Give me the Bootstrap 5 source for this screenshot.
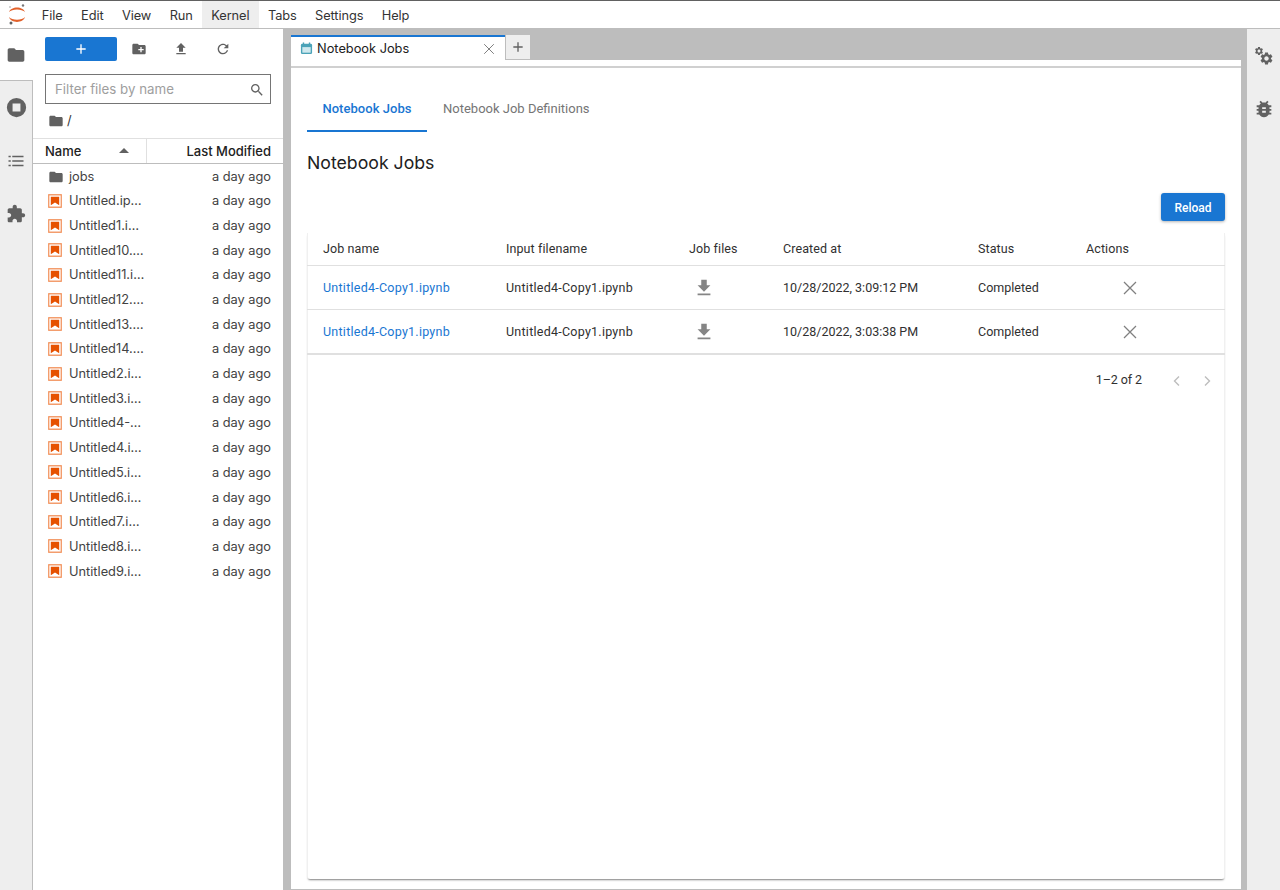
<!DOCTYPE html>
<html lang="en">
<head>
<meta charset="utf-8">
<title>Notebook Jobs</title>
<link href="https://cdn.jsdelivr.net/npm/bootstrap@5.3.0/dist/css/bootstrap.min.css" rel="stylesheet">
<style>
html,body{height:890px;overflow:hidden;margin:0}
body{font-family:Inter,"Liberation Sans",sans-serif;font-size:12.8px;color:#333;background:#bdbdbd}
svg{display:block;fill:#616161}
.jl-top{height:29px;background:#fff;border-top:1px solid #616161;border-bottom:1px solid #bdbdbd;padding-left:32.5px}
.jl-logo{width:32px;margin-left:-32px;padding-left:7px;padding-top:3px}
.jl-menu{padding:0 9.25px;line-height:29px;color:#333;letter-spacing:-.1px}
.jl-menu.on{background:#eee}
.jl-body{height:861px}
.jl-side{width:33px;background:#eee;flex:none}
.jl-side-l{border-right:1px solid #bdbdbd}
.jl-side-btn{height:53px}
.jl-side-btn.on{background:#fff;margin-right:-1px;padding-right:1px;border-bottom:1px solid #bdbdbd;height:52px;position:relative;z-index:1}
.jl-files{width:250px;flex:none;background:#fff}
.jl-tools{padding:8px 0 0 12px;height:43px}
.jl-new{width:72px;height:24px;background:#1976d2;border-radius:2px;border:0;padding:0}
.jl-new svg{fill:#fff}
.jl-tool{width:42px}
.jl-tool1{margin-left:1px}
.jl-filter{margin:2px 12px 0;height:30px;border:1px solid #757575;padding:1px 5px 0 9px;color:#9e9e9e;font-size:13.3px}
.jl-crumb{height:34px;padding-left:15px}
.jl-crumb svg{margin-right:3px}
.jl-head{height:26px;border-top:1px solid #e0e0e0;border-bottom:1px solid #bdbdbd;font-weight:500;font-size:13px;color:#212121}
.jl-hname{width:114px;padding-left:12px;border-right:1px solid #e0e0e0;position:relative}
.jl-hdate{flex:1;text-align:right;padding-right:12px}
.jl-hname,.jl-hdate{line-height:24px}
.jl-caret{position:absolute;left:86px;top:9px;width:0;height:0;border:5px solid transparent;border-top:0;border-bottom:5px solid #616161}
.jl-list{padding-top:.5px}
.jl-row{height:24.7px;padding:0 12px 0 15px}
.jl-row:first-child{height:24px}
.jl-fname{width:21px;flex:none}
.jl-ftext{flex:1;color:#424242}
.jl-fdate{color:#424242}
.jl-split{width:8px;flex:none}
.jl-main{width:950px;flex:none}
.jl-tabbar{height:31px;padding-top:6px}
.jl-tab{width:214px;height:25px;background:#fff;border-top:2px solid #1976d2;padding:0 8px 0 9px;color:#212121}
.jl-tabadd{width:24px;height:24px;margin-left:1px;background:#eee}
.jl-strip{height:8px;background:#fff;border-bottom:2px solid #d0d0d0}
.jl-page{height:821px;background:#fff;padding:0 16px;font-family:Roboto,"Liberation Sans",sans-serif}
.jl-tabs{height:63px;padding-top:21px;font-size:13px;font-weight:500}
.jl-t1{width:120px;text-align:center;color:#1976d2;border-bottom:2px solid #1976d2;height:43px;line-height:40px;letter-spacing:.05px}
.jl-t2{padding-left:16px;color:#757575;line-height:40px;font-weight:400}
.jl-title{font-size:17.7px;font-weight:400;color:#212121;margin:0;height:42px;padding-top:20px;line-height:24px;font-family:Inter,"Liberation Sans",sans-serif;box-sizing:content-box}
.jl-reload-wrap{height:40px}
.jl-reload{width:64px;height:28px;background:#1976d2;color:#fff;border:0;border-radius:3px;padding:1px 0 0;font-size:12px;font-weight:500;box-shadow:0 1px 3px rgba(0,0,0,.3)}
.jl-card{height:646px;box-shadow:0 2px 2px -1px rgba(0,0,0,.5);border-radius:0 0 3px 3px;background:#fff;border-right:1px solid #f0f0f0;border-left:1px solid #f0f0f0}
.jl-table{table-layout:fixed;width:918px;margin:0 0 0 -1px;font-size:12.5px}
.jl-table th,.jl-table td{padding:2px 16px 0;height:44px;vertical-align:middle;border-bottom:1px solid #e0e0e0;font-weight:400;color:#303030}
.jl-table th{height:32px;letter-spacing:.1px}
.jl-table tr:last-child td{height:45px;border-bottom:2px solid #e0e0e0}
.jl-table a{color:#1976d2;text-decoration:none}
.jl-table .jl-fn{letter-spacing:.25px}
.jl-c1,.jl-c2{width:183px}.jl-c3{width:94px}.jl-c4{width:195px}.jl-c5{width:108px}.jl-c6{width:155px}
.jl-ic{margin-left:4px}
.jl-ix{margin-left:34px}
.jl-ic svg{fill:#858585}
.jl-xs{fill:none;stroke:#808080;stroke-width:1.5}
.jl-pager{height:51px;padding-right:9px;color:#303030;font-size:12.5px;margin-left:-1px}
.jl-ptext{margin-right:27px;letter-spacing:-.1px}
.jl-pchev{fill:none;stroke:#bdbdbd;stroke-width:1.4}
.jl-pprev{margin-right:14px}
.jl-gap{width:6px;flex:none}
</style>
</head>
<body>
<svg width="0" height="0" class="position-absolute">
<defs>
<symbol id="i-folder" viewBox="0 0 24 24"><path d="M10 4H4c-1.100 0-1.990.9-1.990 2L2 18c0 1.100.9 2 2 2h16c1.100 0 2-.9 2-2V8c0-1.100-.9-2-2-2h-8l-2-2z"/></symbol>
<symbol id="i-nb" viewBox="1 1 20 20"><path fill="#ef7c3c" opacity=".75" fill-rule="evenodd" d="M2 1h18a1 1 0 0 1 1 1v18a1 1 0 0 1-1 1H2a1 1 0 0 1-1-1V2a1 1 0 0 1 1-1zm1 2v16h16V3z"/><path fill="#e65100" d="M5 5h12v12l-6-4-6 4z"/></symbol>
<symbol id="i-down" viewBox="0 0 24 24"><path d="M19 9h-4V3H9v6H5l7 7 7-7zM5 18v2h14v-2H5z"/></symbol>
<symbol id="i-x" viewBox="0 0 24 24"><path class="jl-xs" d="M4.800 4.800 19.200 19.200M19.200 4.800 4.800 19.200"/></symbol>
<symbol id="i-gear" viewBox="0 0 24 24"><path d="M19.140 12.940c.04-.3.06-.61.06-.94 0-.32-.02-.64-.07-.94l2.030-1.580c.18-.14.23-.41.12-.61l-1.920-3.320c-.12-.22-.37-.29-.59-.22l-2.390.96c-.5-.38-1.030-.7-1.620-.94l-.36-2.540c-.04-.24-.24-.41-.48-.41h-3.840c-.24 0-.43.17-.47.41l-.36 2.540c-.59.24-1.130.57-1.620.94l-2.390-.96c-.22-.08-.47 0-.59.22L2.740 8.870c-.12.21-.08.47.12.61l2.030 1.580c-.05.3-.09.63-.09.94s.02.64.07.94l-2.030 1.580c-.18.14-.23.41-.12.61l1.920 3.320c.12.22.37.29.59.22l2.390-.96c.5.38 1.030.7 1.620.94l.36 2.540c.05.24.24.41.48.41h3.840c.24 0 .44-.17.47-.41l.36-2.540c.59-.24 1.130-.56 1.620-.94l2.390.96c.22.08.47 0 .59-.22l1.920-3.320c.12-.22.07-.47-.12-.61l-2.010-1.580zM12 15.600c-1.980 0-3.600-1.620-3.600-3.600s1.620-3.600 3.600-3.600 3.600 1.620 3.600 3.600-1.620 3.600-3.600 3.600z"/></symbol>
</defs>
</svg>

<header class="jl-top d-flex align-items-stretch">
  <div class="jl-logo">
    <svg width="20" height="22" viewBox="0 0 20 22"><path fill="#e2612a" d="M1 8C3 2 15 2 17 8 14 4.500 4 4.500 1 8z"/><path fill="#e2612a" d="M1 13C3 19.500 15 19.500 17 13 14 16.500 4 16.500 1 13z"/><circle cx="15" cy="1.500" r="1.200" fill="#767677"/><circle cx="3" cy="19" r="1.500" fill="#616262"/><circle cx="2" cy="3" r=".8" fill="#9e9e9e"/></svg>
  </div>
  <div class="jl-menu">File</div><div class="jl-menu">Edit</div><div class="jl-menu">View</div><div class="jl-menu">Run</div><div class="jl-menu on">Kernel</div><div class="jl-menu">Tabs</div><div class="jl-menu">Settings</div><div class="jl-menu">Help</div>
</header>

<div class="jl-body d-flex">
  <aside class="jl-side jl-side-l">
    <div class="jl-side-btn on d-flex align-items-center justify-content-center"><svg width="20" height="20"><use href="#i-folder"/></svg></div>
    <div class="jl-side-btn d-flex align-items-center justify-content-center"><svg width="21" height="21" viewBox="0 0 24 24"><path fill-rule="evenodd" d="M12 1a11 11 0 1 0 0 22 11 11 0 0 0 0-22zM7.500 7.500h9v9h-9z"/></svg></div>
    <div class="jl-side-btn d-flex align-items-center justify-content-center"><svg width="18" height="18" viewBox="0 0 24 24"><path d="M2 5h3v2H2zM7 5h15v2H7zM2 11h3v2H2zM7 11h15v2H7zM2 17h3v2H2zM7 17h15v2H7z"/></svg></div>
    <div class="jl-side-btn d-flex align-items-center justify-content-center"><svg width="20" height="20" viewBox="0 0 24 24"><path d="M20.500 11H19V7c0-1.100-.9-2-2-2h-4V3.500C13 2.120 11.880 1 10.500 1S8 2.120 8 3.500V5H4c-1.100 0-1.990.9-1.990 2v3.800H3.500c1.490 0 2.700 1.210 2.700 2.700s-1.210 2.700-2.700 2.700H2V20c0 1.100.9 2 2 2h3.800v-1.500c0-1.490 1.210-2.700 2.700-2.700 1.490 0 2.700 1.210 2.700 2.700V22H17c1.100 0 2-.9 2-2v-4h1.500c1.380 0 2.500-1.120 2.500-2.500S21.880 11 20.500 11z"/></svg></div>
  </aside>

  <section class="jl-files d-flex flex-column">
    <div class="jl-tools d-flex align-items-start">
      <button class="jl-new d-flex align-items-center justify-content-center" type="button"><svg width="16" height="16" viewBox="0 0 24 24"><path d="M19 13h-6v6h-2v-6H5v-2h6V5h2v6h6z"/></svg></button>
      <div class="jl-tool jl-tool1 d-flex justify-content-center pt-1"><svg width="16" height="16" viewBox="0 0 24 24"><path fill-rule="evenodd" d="M20 6h-8l-2-2H4c-1.110 0-1.990.89-1.990 2L2 18c0 1.110.89 2 2 2h16c1.110 0 2-.89 2-2V8c0-1.110-.89-2-2-2zm-1 8h-3v3h-2v-3h-3v-2h3V9h2v3h3v2z"/></svg></div>
      <div class="jl-tool d-flex justify-content-center pt-1"><svg width="16" height="16" viewBox="0 0 24 24"><path d="M5 20h14v-2H5v2zm0-10h4v6h6v-6h4l-7-7-7 7z"/></svg></div>
      <div class="jl-tool d-flex justify-content-center pt-1"><svg width="16" height="16" viewBox="0 0 24 24"><path d="M17.650 6.350C16.200 4.900 14.210 4 12 4c-4.420 0-7.990 3.580-7.990 8s3.570 8 7.990 8c3.730 0 6.840-2.550 7.730-6h-2.080c-.82 2.330-3.040 4-5.650 4-3.310 0-6-2.690-6-6s2.690-6 6-6c1.660 0 3.140.69 4.220 1.780L13 11h7V4l-2.350 2.350z"/></svg></div>
    </div>
    <div class="jl-filter d-flex align-items-center justify-content-between"><span>Filter files by name</span><svg width="16" height="16" viewBox="0 0 24 24"><path d="M15.500 14h-.79l-.28-.27C15.410 12.590 16 11.110 16 9.500 16 5.910 13.090 3 9.500 3S3 5.910 3 9.500 5.910 16 9.500 16c1.610 0 3.090-.59 4.230-1.570l.27.28v.79l5 4.990L20.490 19l-4.990-5zm-6 0C7.010 14 5 11.990 5 9.500S7.010 5 9.500 5 14 7.010 14 9.500 11.990 14 9.500 14z"/></svg></div>
    <div class="jl-crumb d-flex align-items-center"><svg width="16" height="16"><use href="#i-folder"/></svg><span>/</span></div>
    <div class="jl-head d-flex"><div class="jl-hname">Name<span class="jl-caret"></span></div><div class="jl-hdate">Last Modified</div></div>
    <div class="jl-list">
      <div class="jl-row d-flex align-items-center"><span class="jl-fname"><svg width="16" height="16"><use href="#i-folder"/></svg></span><span class="jl-ftext">jobs</span><span class="jl-fdate">a day ago</span></div>
      <div class="jl-row d-flex align-items-center"><span class="jl-fname"><svg width="14" height="14"><use href="#i-nb"/></svg></span><span class="jl-ftext">Untitled.ip…</span><span class="jl-fdate">a day ago</span></div>
      <div class="jl-row d-flex align-items-center"><span class="jl-fname"><svg width="14" height="14"><use href="#i-nb"/></svg></span><span class="jl-ftext">Untitled1.i…</span><span class="jl-fdate">a day ago</span></div>
      <div class="jl-row d-flex align-items-center"><span class="jl-fname"><svg width="14" height="14"><use href="#i-nb"/></svg></span><span class="jl-ftext">Untitled10.…</span><span class="jl-fdate">a day ago</span></div>
      <div class="jl-row d-flex align-items-center"><span class="jl-fname"><svg width="14" height="14"><use href="#i-nb"/></svg></span><span class="jl-ftext">Untitled11.i…</span><span class="jl-fdate">a day ago</span></div>
      <div class="jl-row d-flex align-items-center"><span class="jl-fname"><svg width="14" height="14"><use href="#i-nb"/></svg></span><span class="jl-ftext">Untitled12.…</span><span class="jl-fdate">a day ago</span></div>
      <div class="jl-row d-flex align-items-center"><span class="jl-fname"><svg width="14" height="14"><use href="#i-nb"/></svg></span><span class="jl-ftext">Untitled13.…</span><span class="jl-fdate">a day ago</span></div>
      <div class="jl-row d-flex align-items-center"><span class="jl-fname"><svg width="14" height="14"><use href="#i-nb"/></svg></span><span class="jl-ftext">Untitled14.…</span><span class="jl-fdate">a day ago</span></div>
      <div class="jl-row d-flex align-items-center"><span class="jl-fname"><svg width="14" height="14"><use href="#i-nb"/></svg></span><span class="jl-ftext">Untitled2.i…</span><span class="jl-fdate">a day ago</span></div>
      <div class="jl-row d-flex align-items-center"><span class="jl-fname"><svg width="14" height="14"><use href="#i-nb"/></svg></span><span class="jl-ftext">Untitled3.i…</span><span class="jl-fdate">a day ago</span></div>
      <div class="jl-row d-flex align-items-center"><span class="jl-fname"><svg width="14" height="14"><use href="#i-nb"/></svg></span><span class="jl-ftext">Untitled4-…</span><span class="jl-fdate">a day ago</span></div>
      <div class="jl-row d-flex align-items-center"><span class="jl-fname"><svg width="14" height="14"><use href="#i-nb"/></svg></span><span class="jl-ftext">Untitled4.i…</span><span class="jl-fdate">a day ago</span></div>
      <div class="jl-row d-flex align-items-center"><span class="jl-fname"><svg width="14" height="14"><use href="#i-nb"/></svg></span><span class="jl-ftext">Untitled5.i…</span><span class="jl-fdate">a day ago</span></div>
      <div class="jl-row d-flex align-items-center"><span class="jl-fname"><svg width="14" height="14"><use href="#i-nb"/></svg></span><span class="jl-ftext">Untitled6.i…</span><span class="jl-fdate">a day ago</span></div>
      <div class="jl-row d-flex align-items-center"><span class="jl-fname"><svg width="14" height="14"><use href="#i-nb"/></svg></span><span class="jl-ftext">Untitled7.i…</span><span class="jl-fdate">a day ago</span></div>
      <div class="jl-row d-flex align-items-center"><span class="jl-fname"><svg width="14" height="14"><use href="#i-nb"/></svg></span><span class="jl-ftext">Untitled8.i…</span><span class="jl-fdate">a day ago</span></div>
      <div class="jl-row d-flex align-items-center"><span class="jl-fname"><svg width="14" height="14"><use href="#i-nb"/></svg></span><span class="jl-ftext">Untitled9.i…</span><span class="jl-fdate">a day ago</span></div>
    </div>
  </section>

  <div class="jl-split"></div>

  <main class="jl-main">
    <div class="jl-tabbar d-flex align-items-start">
      <div class="jl-tab d-flex align-items-center">
        <svg width="13" height="13" viewBox="0 0 14 14" class="me-1 flex-shrink-0"><rect x="1" y="2" width="12" height="11" rx="1.500" fill="#4ba3b8"/><rect x="2.500" y="5.500" width="9" height="6" fill="#cfe8ee"/><rect x="3" y="0.500" width="1.500" height="3" fill="#4ba3b8"/><rect x="9.500" y="0.500" width="1.500" height="3" fill="#4ba3b8"/></svg>
        <span class="flex-grow-1">Notebook Jobs</span>
        <svg width="16" height="16"><use href="#i-x"/></svg>
      </div>
      <div class="jl-tabadd d-flex align-items-center justify-content-center"><svg width="16" height="16" viewBox="0 0 24 24"><path d="M19 13h-6v6h-2v-6H5v-2h6V5h2v6h6z"/></svg></div>
    </div>
    <div class="jl-strip"></div>
    <div class="jl-page">
      <div class="jl-tabs d-flex"><div class="jl-t1">Notebook Jobs</div><div class="jl-t2">Notebook Job Definitions</div></div>
      <h1 class="jl-title">Notebook Jobs</h1>
      <div class="jl-reload-wrap d-flex justify-content-end align-items-start"><button class="jl-reload" type="button">Reload</button></div>
      <div class="jl-card">
        <table class="table jl-table">
          <colgroup><col class="jl-c1"><col class="jl-c2"><col class="jl-c3"><col class="jl-c4"><col class="jl-c5"><col class="jl-c6"></colgroup>
          <thead><tr><th>Job name</th><th>Input filename</th><th>Job files</th><th>Created at</th><th>Status</th><th>Actions</th></tr></thead>
          <tbody>
            <tr><td class="jl-fn"><a href="#">Untitled4-Copy1.ipynb</a></td><td class="jl-fn">Untitled4-Copy1.ipynb</td><td><span class="jl-ic d-block"><svg width="22" height="22"><use href="#i-down"/></svg></span></td><td>10/28/2022, 3:09:12 PM</td><td>Completed</td><td><span class="jl-ix d-block"><svg width="20" height="20"><use href="#i-x"/></svg></span></td></tr>
            <tr><td class="jl-fn"><a href="#">Untitled4-Copy1.ipynb</a></td><td class="jl-fn">Untitled4-Copy1.ipynb</td><td><span class="jl-ic d-block"><svg width="22" height="22"><use href="#i-down"/></svg></span></td><td>10/28/2022, 3:03:38 PM</td><td>Completed</td><td><span class="jl-ix d-block"><svg width="20" height="20"><use href="#i-x"/></svg></span></td></tr>
          </tbody>
        </table>
        <div class="jl-pager d-flex align-items-center justify-content-end">
          <span class="jl-ptext">1–2 of 2</span>
          <svg width="16" height="16" viewBox="0 0 16 16" class="jl-pchev jl-pprev"><path d="M10 3.500 5.500 8l4.500 4.500"/></svg>
          <svg width="16" height="16" viewBox="0 0 16 16" class="jl-pchev"><path d="M6 3.500 10.500 8 6 12.500"/></svg>
        </div>
      </div>
    </div>
  </main>

  <div class="jl-gap"></div>
  <aside class="jl-side">
    <div class="jl-side-btn d-flex align-items-center justify-content-center"><svg width="20" height="20" viewBox="0 0 20 20"><use href="#i-gear" x="0" y="0" width="10" height="10"/><use href="#i-gear" x="5" y="5" width="15" height="15"/></svg></div>
    <div class="jl-side-btn d-flex align-items-center justify-content-center"><svg width="22" height="22" viewBox="0 0 24 24"><path fill-rule="evenodd" d="M20 8h-2.810c-.45-.78-1.070-1.450-1.820-1.960L17 4.410 15.590 3l-2.170 2.170C12.960 5.060 12.490 5 12 5c-.49 0-.96.06-1.410.17L8.410 3 7 4.410l1.620 1.630C7.880 6.550 7.260 7.220 6.810 8H4v2h2.090c-.05.33-.09.66-.09 1v1H4v2h2v1c0 .34.04.67.09 1H4v2h2.810c1.040 1.790 2.970 3 5.190 3s4.150-1.210 5.190-3H20v-2h-2.090c.05-.33.09-.66.09-1v-1h2v-2h-2v-1c0-.34-.04-.67-.09-1H20V8zm-6 8h-4v-2h4v2zm0-4h-4v-2h4v2z"/></svg></div>
  </aside>
</div>
</body>
</html>
